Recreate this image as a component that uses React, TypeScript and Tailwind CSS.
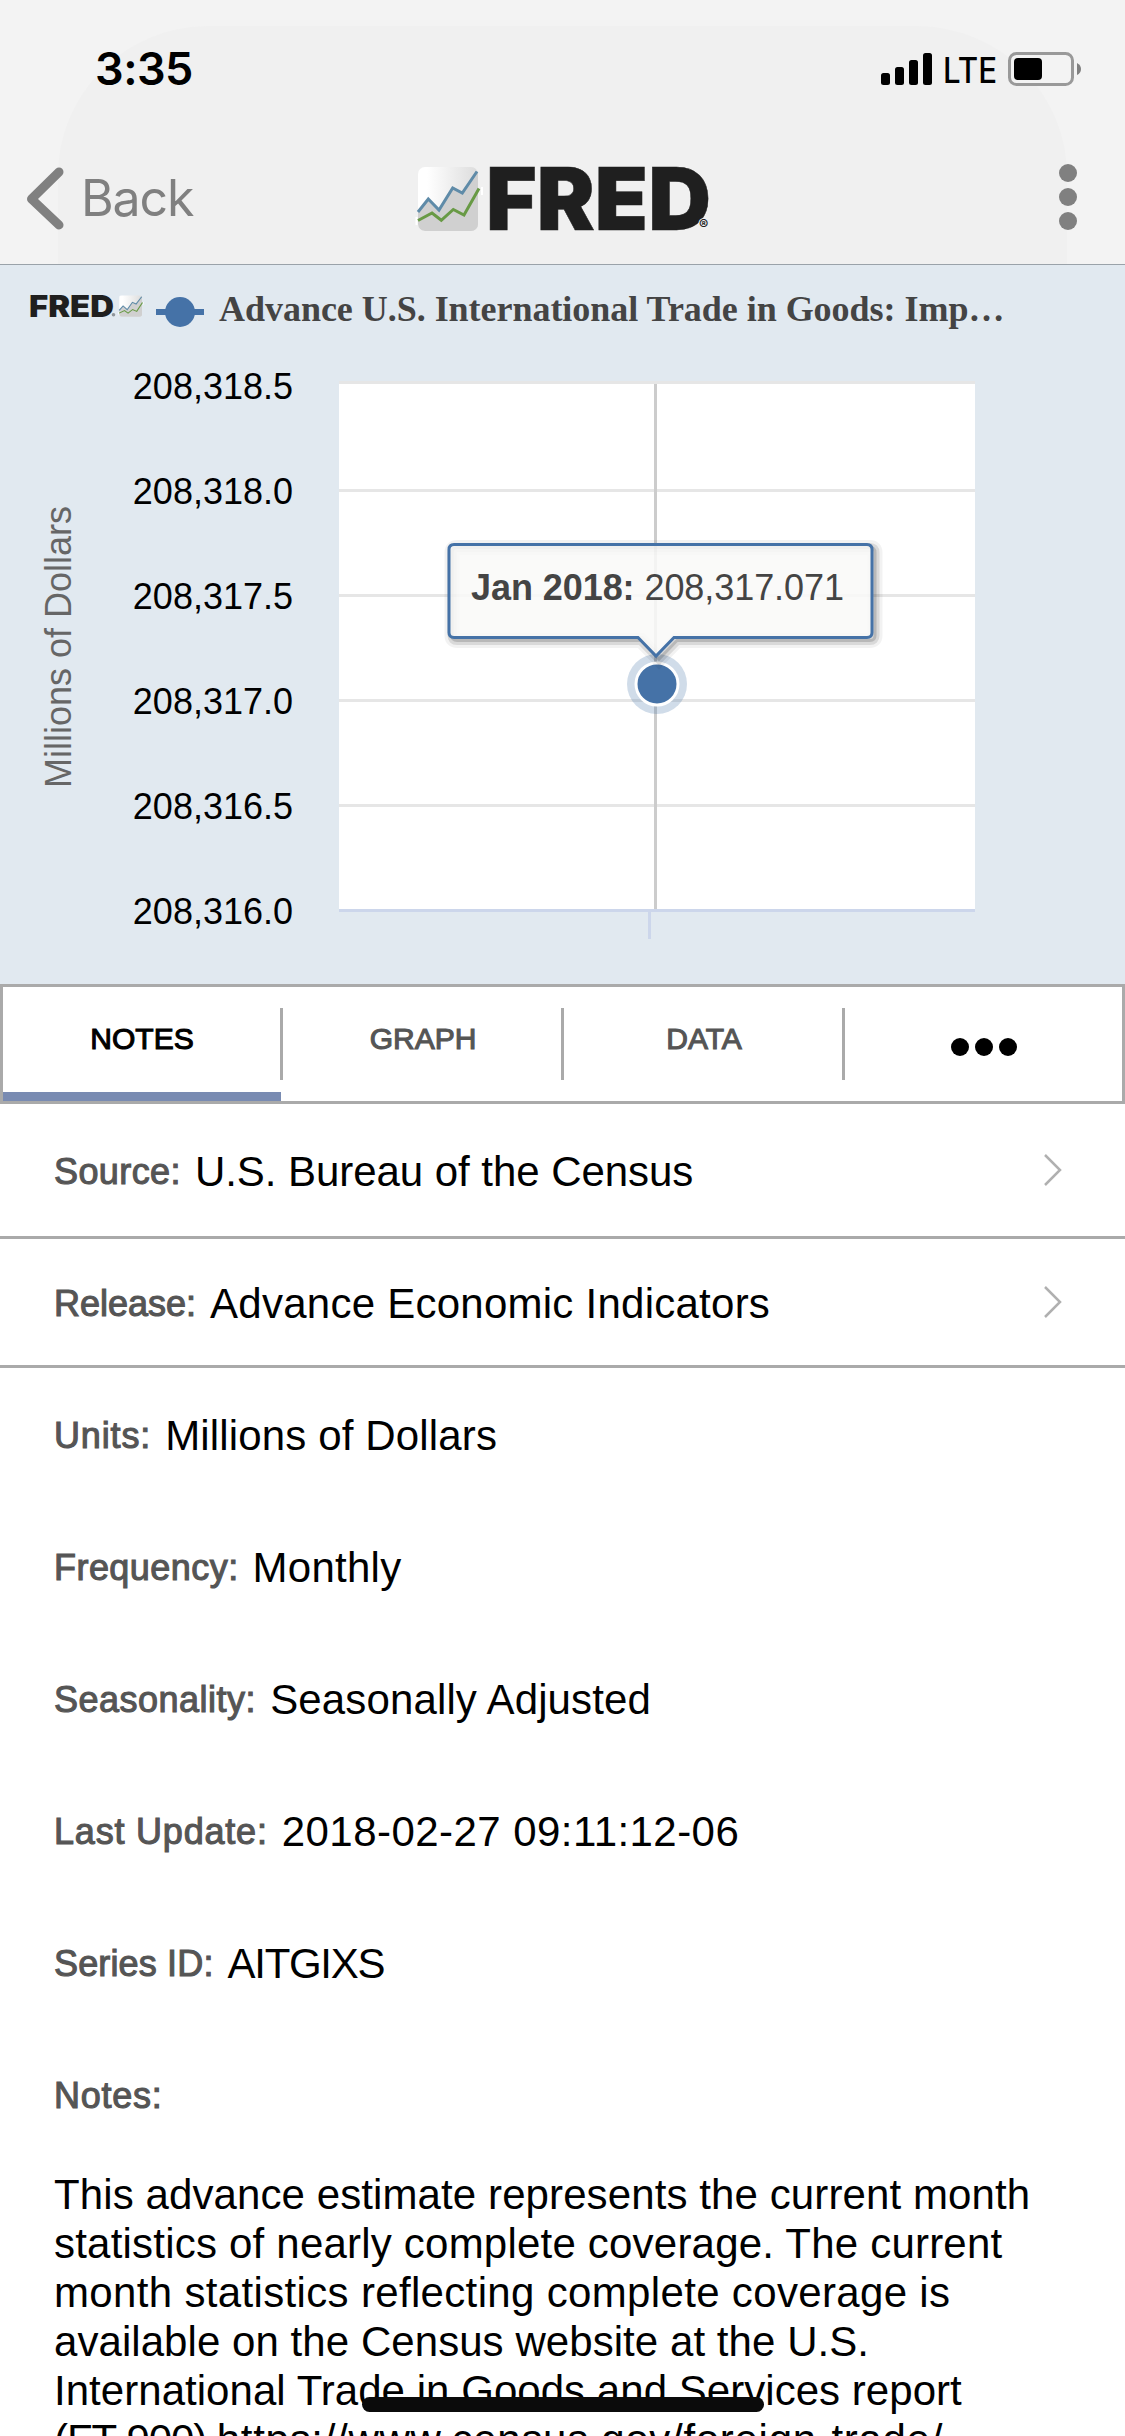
const TABS = ["NOTES", "GRAPH", "DATA"];

const Y_LABELS = ["208,318.5", "208,318.0", "208,317.5", "208,317.0", "208,316.5", "208,316.0"];

const GRID_LINES = [489, 594, 699, 804];

const TOOLTIP_PATH =
  "M454 544.500H867Q872 544.500 872 549.500V632.500Q872 637.500 867 637.500H674L656 656L638 637.500H454Q449 637.500 449 632.500V549.500Q449 544.500 454 544.500Z";

const TOOLTIP_SHADOW = [
  { width: 15, opacity: 0.05 },
  { width: 9, opacity: 0.1 },
  { width: 3, opacity: 0.15 },
];

const LINKS = [
  {
    label: "Source:",
    labelClass: "tracking-[0.4px]",
    value: "U.S. Bureau of the Census",
    valueClass: "tracking-[-0.05px]",
    row: "h-[135px] pt-[46px]",
  },
  {
    label: "Release:",
    labelClass: "tracking-[0px]",
    value: "Advance Economic Indicators",
    valueClass: "tracking-[0.25px]",
    row: "h-[129px] pt-[43px]",
  },
];

const DETAILS = [
  { label: "Units:", labelClass: "tracking-[0.85px]", value: "Millions of Dollars", valueClass: "tracking-[0.15px]" },
  { label: "Frequency:", labelClass: "tracking-[0.45px]", value: "Monthly", valueClass: "tracking-[0.25px]" },
  { label: "Seasonality:", labelClass: "tracking-[0.5px]", value: "Seasonally Adjusted", valueClass: "tracking-[0.14px]" },
  { label: "Last Update:", labelClass: "tracking-[0.8px]", value: "2018-02-27 09:11:12-06", valueClass: "tracking-[0.45px]" },
  { label: "Series ID:", labelClass: "tracking-[0.15px]", value: "AITGIXS", valueClass: "tracking-[-1.3px]" },
  { label: "Notes:", labelClass: "tracking-[0.75px]", value: "", valueClass: "" },
];

const NOTES = [
  { text: "This advance estimate represents the current month", className: "tracking-[0.1px]" },
  { text: "statistics of nearly complete coverage. The current", className: "tracking-[0.21px]" },
  { text: "month statistics reflecting complete coverage is", className: "tracking-[0.34px]" },
  { text: "available on the Census website at the U.S.", className: "tracking-[0.06px]" },
  { text: "International Trade in Goods and Services report", className: "tracking-[0.04px]" },
];

const ChartBadge = ({ id, className }: { id: string; className: string }) => (
  <svg viewBox="0 0 68 66" preserveAspectRatio="none" className={className}>
    <defs>
      <linearGradient id={id} x1="0" y1="0" x2="1" y2="0">
        <stop offset="0.15" stopColor="#ffffff" />
        <stop offset="1" stopColor="#dcdcdc" />
      </linearGradient>
      <clipPath id={`${id}-clip`}>
        <rect x="3" y="1" width="60" height="64" rx="7" />
      </clipPath>
    </defs>
    <g clipPath={`url(#${id}-clip)`}>
      <rect x="3" y="1" width="60" height="64" fill={`url(#${id})`} />
      <path d="M3 46L13.300 33L24 44L37.700 22L47.300 27L63 5V66H3Z" fill="#d0d0d0" />
    </g>
    <path d="M1.500 51v8M67 21v8" stroke="#fff" strokeWidth="2" />
    <path d="M3 46L13.300 33L24 44L37.700 22L47.300 27L62 5.500" fill="none" stroke="#5f8ba8" strokeWidth="3" />
    <path d="M3 54.500L17 47L26.300 54.300L38.300 43.500L49 49L64 22.500" fill="none" stroke="#689a45" strokeWidth="3" />
  </svg>
);

const StatusBar = () => (
  <div className="flex h-[138px] items-start justify-between pt-[44px] pl-[95px] pr-[44px]">
    <span className="font-[Inter,sans-serif] text-[45px] leading-[50px] font-semibold tracking-[-0.5px]">3:35</span>
    <div className="flex items-center pt-[8px]">
      <svg viewBox="0 0 51 34" className="h-[34px] w-[51px]">
        <rect x="0" y="21" width="9" height="12" rx="2.500" />
        <rect x="14" y="15" width="9" height="18" rx="2.500" />
        <rect x="28" y="8" width="9" height="25" rx="2.500" />
        <rect x="42" y="1" width="9" height="32" rx="2.500" />
      </svg>
      <svg viewBox="0 0 58 34" className="ml-[9px] h-[34px] w-[58px] overflow-visible">
        <text x="2" y="31" textLength="54" lengthAdjust="spacingAndGlyphs" className="font-[Inter,sans-serif] text-[35px] font-medium">LTE</text>
      </svg>
      <svg viewBox="0 0 73 34" className="ml-[9px] h-[34px] w-[73px]">
        <rect x="1.500" y="1.500" width="63" height="31" rx="7" fill="#f3f3f3" stroke="#999" strokeWidth="3" />
        <rect x="6" y="6" width="28" height="22" rx="4" />
        <path d="M69 11q4 2 4 6t-4 6z" fill="#808080" />
      </svg>
    </div>
  </div>
);

const Header = () => (
  <header className="relative h-[265px] border-b border-[#9aa2a9] bg-[#f3f3f3]">
    <div className="absolute top-[26px] bottom-0 left-[58px] w-[1009px] rounded-t-[150px] bg-[#f0f0f0]"></div>
    <div className="relative">
      <StatusBar />
      <nav className="flex h-[126px] items-start justify-between pl-[26px] pr-[48px] pt-[24px]">
        <div className="flex w-[389px] items-start text-[#808080]">
          <svg viewBox="0 0 38 66" className="mt-[3px] h-[66px] w-[38px]" fill="none" stroke="currentColor" strokeWidth="9" strokeLinecap="round" strokeLinejoin="round">
            <path d="M33 7L5.500 34L33 60" />
          </svg>
          <span className="ml-[17px] mt-[6px] font-[Inter,sans-serif] text-[50px] leading-[60px] tracking-[-1.1px]">Back</span>
        </div>
        <div className="flex flex-1 items-start">
          <ChartBadge id="badge" className="mt-[4px] h-[66px] w-[68px]" />
          <svg viewBox="483 145 240 105" className="-mt-[17px] h-[105px] w-[240px] overflow-visible" fill="#1f1f1f">
            <text x="486" y="229.500" textLength="225" lengthAdjust="spacingAndGlyphs" stroke="#1f1f1f" strokeWidth="0.500" className="font-[Inter,sans-serif] text-[86px] font-black">FRED</text>
            <text x="699" y="230" stroke="#f0f0f0" strokeWidth="2" paintOrder="stroke" className="font-[Inter,sans-serif] text-[14px] font-bold">®</text>
          </svg>
        </div>
        <svg viewBox="0 0 18 68" className="mt-[1px] h-[68px] w-[18px]" fill="#808080">
          <circle cx="9" cy="10" r="9" />
          <circle cx="9" cy="34" r="9" />
          <circle cx="9" cy="58" r="9" />
        </svg>
      </nav>
    </div>
  </header>
);

const Chart = () => (
  <section className="h-[719px] bg-[#e1e9f0]">
    <div className="flex h-[94px] items-start pl-[29px] pt-[25px]">
      <svg viewBox="0 0 90 32" className="h-[32px] w-[90px] overflow-visible" fill="#1f1f1f">
        <text x="0" y="26.500" textLength="85" lengthAdjust="spacingAndGlyphs" className="font-[Inter,sans-serif] text-[29.500px] font-black">FRED</text>
        <circle cx="84.500" cy="24.800" r="1.800" fill="#8f959a" />
      </svg>
      <ChartBadge id="mini" className="mt-[5px] -ml-[1px] h-[22px] w-[26px]" />
      <svg viewBox="0 0 48 32" className="ml-[12px] mt-[6px] h-[32px] w-[48px]" fill="#4572a7">
        <rect y="13" width="48" height="6" />
        <circle cx="24" cy="16" r="15" />
      </svg>
      <h1 className="ml-[15px] -mt-[1px] font-['Liberation_Serif',serif] text-[36px] leading-[40px] font-bold tracking-[-0.03px] whitespace-nowrap text-[#444]">
        Advance U.S. International Trade in Goods: Imp…
      </h1>
    </div>
    <svg viewBox="0 359 1125 625" className="h-[625px] w-[1125px] font-['Liberation_Sans',sans-serif] text-[36px]">
      <rect x="339" y="381" width="636" height="531" fill="#fff" />
      <rect x="339" y="381" width="636" height="3" fill="#e6e6e6" />
      {GRID_LINES.map((y) => (
        <rect key={y} x="339" y={y} width="636" height="3" fill="#e6e6e6" />
      ))}
      <rect x="654" y="384" width="3" height="525" fill="#ccc" />
      <path d="M339 909H975V912H651V939H648V912H339Z" fill="#ccd6eb" />
      {Y_LABELS.map((label, i) => (
        <text key={label} x="293" y={399 + i * 105} textAnchor="end">{label}</text>
      ))}
      <text transform="translate(71 647) rotate(-90)" textAnchor="middle" fill="#666">Millions of Dollars</text>
      <circle cx="657" cy="684" r="30" fill="#4572a7" fillOpacity="0.25" />
      <circle cx="657" cy="684" r="21" fill="#4572a7" stroke="#fff" strokeWidth="3" />
      {TOOLTIP_SHADOW.map(({ width, opacity }) => (
        <path key={width} d={TOOLTIP_PATH} transform="translate(3 3)" fill="none" stroke="#000" strokeWidth={width} strokeOpacity={opacity} />
      ))}
      <path d={TOOLTIP_PATH} fill="#f9f9f8" fillOpacity="0.85" stroke="#4572a7" strokeWidth="3" />
      <text x="471" y="600" fill="#444" textLength="373"><tspan fontWeight="bold">Jan 2018:</tspan> 208,317.071</text>
    </svg>
  </section>
);

const TabBar = () => (
  <div className="flex h-[120px] border-[3px] border-[#aaa] text-[30px]">
    {TABS.map((tab, i) => (
      <div key={tab} className={i === 0 ? "relative w-[278px] border-b-[9px] border-[#798bb2] text-black" : "relative w-[281px] pl-[3px] text-[#555]"}>
        <div className="pt-[32px] text-center leading-[40px] [-webkit-text-stroke:1.1px_currentColor]">{tab}</div>
        <div className="absolute top-[21px] -right-[2px] h-[72px] w-[3px] bg-[#aaa]"></div>
      </div>
    ))}
    <div className="flex flex-1 justify-center pt-[51px] pl-[2px]">
      <svg viewBox="0 0 66 18" className="h-[18px] w-[66px]">
        <circle cx="9" cy="9" r="9" />
        <circle cx="33" cy="9" r="9" />
        <circle cx="57" cy="9" r="9" />
      </svg>
    </div>
  </div>
);

type FieldProps = { label: string; labelClass: string; value: string; valueClass: string };

const Field = ({ label, labelClass, value, valueClass }: FieldProps) => (
  <div className="flex items-start whitespace-nowrap">
    <span className={`text-[36px] leading-[44px] text-[#555] [-webkit-text-stroke:1.1px_currentColor] ${labelClass}`}>{label}</span>
    <span className={`ml-[14px] text-[42px] leading-[44px] ${valueClass}`}>{value}</span>
  </div>
);

const App = () => {
  return (
    <div className="relative h-[2436px] w-[1125px] overflow-hidden bg-white font-['Liberation_Sans',sans-serif] text-black">
      <Header />
      <Chart />
      <TabBar />
      {LINKS.map(({ row, ...field }) => (
        <div key={field.label} className={`flex items-start justify-between border-b-[3px] border-[#aaa] pl-[54px] pr-[62px] ${row}`}>
          <Field {...field} />
          <svg viewBox="0 0 20 34" className="mt-[3px] h-[34px] w-[20px]" fill="none" stroke="#b0b0b0" strokeWidth="2.500">
            <path d="M2 2L17 17L2 32" />
          </svg>
        </div>
      ))}
      <div className="pl-[54px] pt-[46px]">
        {DETAILS.map((field) => (
          <div key={field.label} className="h-[132px]">
            <Field {...field} />
          </div>
        ))}
        <div className="-mt-[36px] text-[42px] leading-[49px] whitespace-nowrap">
          {NOTES.map(({ text, className }) => (
            <p key={text} className={className}>{text}</p>
          ))}
          <p>
            <span className="tracking-[-1.1px]">(FT-900) </span>
            <span className="tracking-[0.7px]">https://www.census.gov/foreign-trade/</span>
          </p>
        </div>
      </div>
      <div className="absolute bottom-[24px] left-[362px] h-[15px] w-[402px] rounded-full bg-[#0b0b0b]"></div>
    </div>
  );
};

export default App;
